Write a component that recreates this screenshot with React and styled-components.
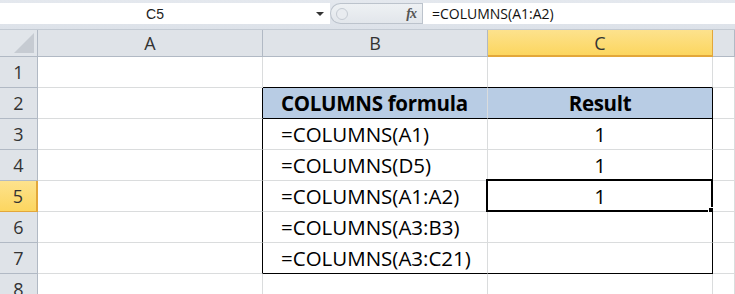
import styled, { createGlobalStyle, css } from "styled-components";

const GlobalStyle = createGlobalStyle`
  html, body {
    margin: 0;
    padding: 0;
    background: #fff;
    overflow: hidden;
  }
  body {
    font-family: "Liberation Sans", Arial, sans-serif;
  }
`;

const GRID = "#dadcdd";
const HEAD_LINE = "#b1b9c4";

const Window = styled.div`
  width: 735px;
  height: 294px;
  overflow: hidden;
  background: #fff;
`;

const FormulaBar = styled.div`
  display: flex;
  align-items: stretch;
  height: 30px;
  box-sizing: border-box;
  padding: 3px 0 5px;
  background: linear-gradient(#e4e8ee, #dde2e9);
  border-bottom: 1px solid #c3cad3;
`;

const NameBox = styled.div`
  position: relative;
  width: 330px;
  display: flex;
  align-items: center;
  justify-content: center;
  background: #fff;
  font-size: 14px;
  color: #222;
  padding-right: 20px;
  box-sizing: border-box;
`;

const DropArrow = styled.span`
  position: absolute;
  right: 6px;
  top: 9px;
  width: 0;
  height: 0;
  border-left: 4px solid transparent;
  border-right: 4px solid transparent;
  border-top: 4px solid #333;
`;

const Pill = styled.div`
  width: 92px;
  display: flex;
  align-items: center;
  justify-content: space-between;
  padding: 0 6px 0 5px;
  box-sizing: border-box;
  border: 1px solid #bcc3cc;
  border-right: none;
  border-radius: 12px 0 0 12px;
  background: linear-gradient(#eef1f4, #e2e6eb);
`;

const Knob = styled.span`
  width: 10px;
  height: 10px;
  border-radius: 50%;
  border: 1px solid #c5cbd3;
  background: #e9ecf0;
`;

const Fx = styled.span`
  font-family: "Liberation Serif", serif;
  font-style: italic;
  font-weight: bold;
  font-size: 14px;
  color: #555;
  letter-spacing: -1px;
`;

const FormulaInput = styled.div`
  flex: 1;
  display: flex;
  align-items: center;
  padding-left: 9px;
  background: #fff;
  border-left: 1px solid #bcc3cc;
  font-family: "Open Sans", sans-serif;
  font-size: 14px;
  color: #111;
`;

const Sheet = styled.div`
  display: grid;
  grid-template-columns: 38px 225px 225px 225px 1fr;
  grid-template-rows: 27px repeat(8, 31px);
`;

const headerBase = css`
  display: flex;
  align-items: center;
  justify-content: center;
  box-sizing: border-box;
  font-family: "Open Sans", sans-serif;
  font-size: 18px;
  color: #333;
  border-right: 1px solid ${HEAD_LINE};
  border-bottom: 1px solid ${HEAD_LINE};
`;

const Corner = styled.div`
  ${headerBase};
  position: relative;
  background: #e1e5ea;
  &::after {
    content: "";
    position: absolute;
    right: 3px;
    bottom: 3px;
    width: 0;
    height: 0;
    border-left: 20px solid transparent;
    border-bottom: 20px solid #c6cbd2;
  }
`;

const ColHead = styled.div`
  ${headerBase};
  background: ${(p) =>
    p.$active ? "linear-gradient(#fde28d, #fcd660)" : "#dfe3e8"};
  ${(p) => p.$active && `border-bottom: 2px solid #e3a73a; border-right-color: #e3a73a;`}
`;

const RowHead = styled.div`
  ${headerBase};
  background: ${(p) =>
    p.$active ? "linear-gradient(#fde28d, #fcd660)" : "#dfe3e8"};
  ${(p) => p.$active && `border-right: 2px solid #e3a73a; border-bottom-color: #e3a73a;`}
`;

const Cell = styled.div`
  position: relative;
  display: flex;
  align-items: center;
  justify-content: ${(p) => (p.$center ? "center" : "flex-start")};
  padding-left: ${(p) => (p.$center ? 0 : 18)}px;
  box-sizing: border-box;
  font-family: "Open Sans", sans-serif;
  font-size: 20.5px;
  font-weight: ${(p) => (p.$bold ? 700 : 400)};
  letter-spacing: ${(p) => (p.$bold ? "-0.3px" : "0")};
  color: #000;
  white-space: nowrap;
  background: ${(p) => p.$fill || "#fff"};
  border-right: 1px solid ${(p) => p.$right || GRID};
  border-bottom: 1px solid ${(p) => p.$bottom || GRID};
`;

const Selection = styled.div`
  position: absolute;
  left: -2px;
  top: -2px;
  right: -1px;
  bottom: -1px;
  border: 2px solid #000;
  pointer-events: none;
  &::after {
    content: "";
    position: absolute;
    right: -4px;
    bottom: -4px;
    width: 5px;
    height: 5px;
    background: #000;
    border: 1px solid #fff;
  }
`;

const columns = ["A", "B", "C", ""];

const table = [
  ["COLUMNS formula", "Result"],
  ["=COLUMNS(A1)", "1"],
  ["=COLUMNS(D5)", "1"],
  ["=COLUMNS(A1:A2)", "1"],
  ["=COLUMNS(A3:B3)", ""],
  ["=COLUMNS(A3:C21)", ""],
];

// table sits at B2:C7 (col index 0 = A)
function cellProps(row, col) {
  const inTable = row >= 2 && row <= 7 && (col === 1 || col === 2);
  const props = {};
  if (col === 0 && row >= 2 && row <= 7) props.$right = "#000";
  if (row === 1 && (col === 1 || col === 2)) props.$bottom = "#000";
  if (inTable) {
    if (col === 2) props.$right = "#000";
    if (row === 2 || row === 7) props.$bottom = "#000";
    if (row === 2) {
      props.$fill = "#b8cce4";
      props.$bold = true;
    }
    if (col === 2) props.$center = true;
  }
  return props;
}

function Row({ r }) {
  const data = r >= 2 && r <= 7 ? table[r - 2] : null;
  return (
    <>
      <RowHead $active={r === 5}>{r}</RowHead>
      {[0, 1, 2, 3].map((c) => {
        const text = data && (c === 1 || c === 2) ? data[c - 1] : "";
        return (
          <Cell key={c} {...cellProps(r, c)}>
            {text}
            {r === 5 && c === 2 && <Selection />}
          </Cell>
        );
      })}
    </>
  );
}

export default function App() {
  const rows = [1, 2, 3, 4, 5, 6, 7, 8];
  return (
    <Window>
      <GlobalStyle />
      <FormulaBar>
        <NameBox>
          C5
          <DropArrow />
        </NameBox>
        <Pill>
          <Knob />
          <Fx>fx</Fx>
        </Pill>
        <FormulaInput>=COLUMNS(A1:A2)</FormulaInput>
      </FormulaBar>
      <Sheet>
        <Corner />
        {columns.map((c, i) => (
          <ColHead key={i} $active={c === "C"}>
            {c}
          </ColHead>
        ))}
        {rows.map((r) => (
          <Row key={r} r={r} />
        ))}
      </Sheet>
    </Window>
  );
}
